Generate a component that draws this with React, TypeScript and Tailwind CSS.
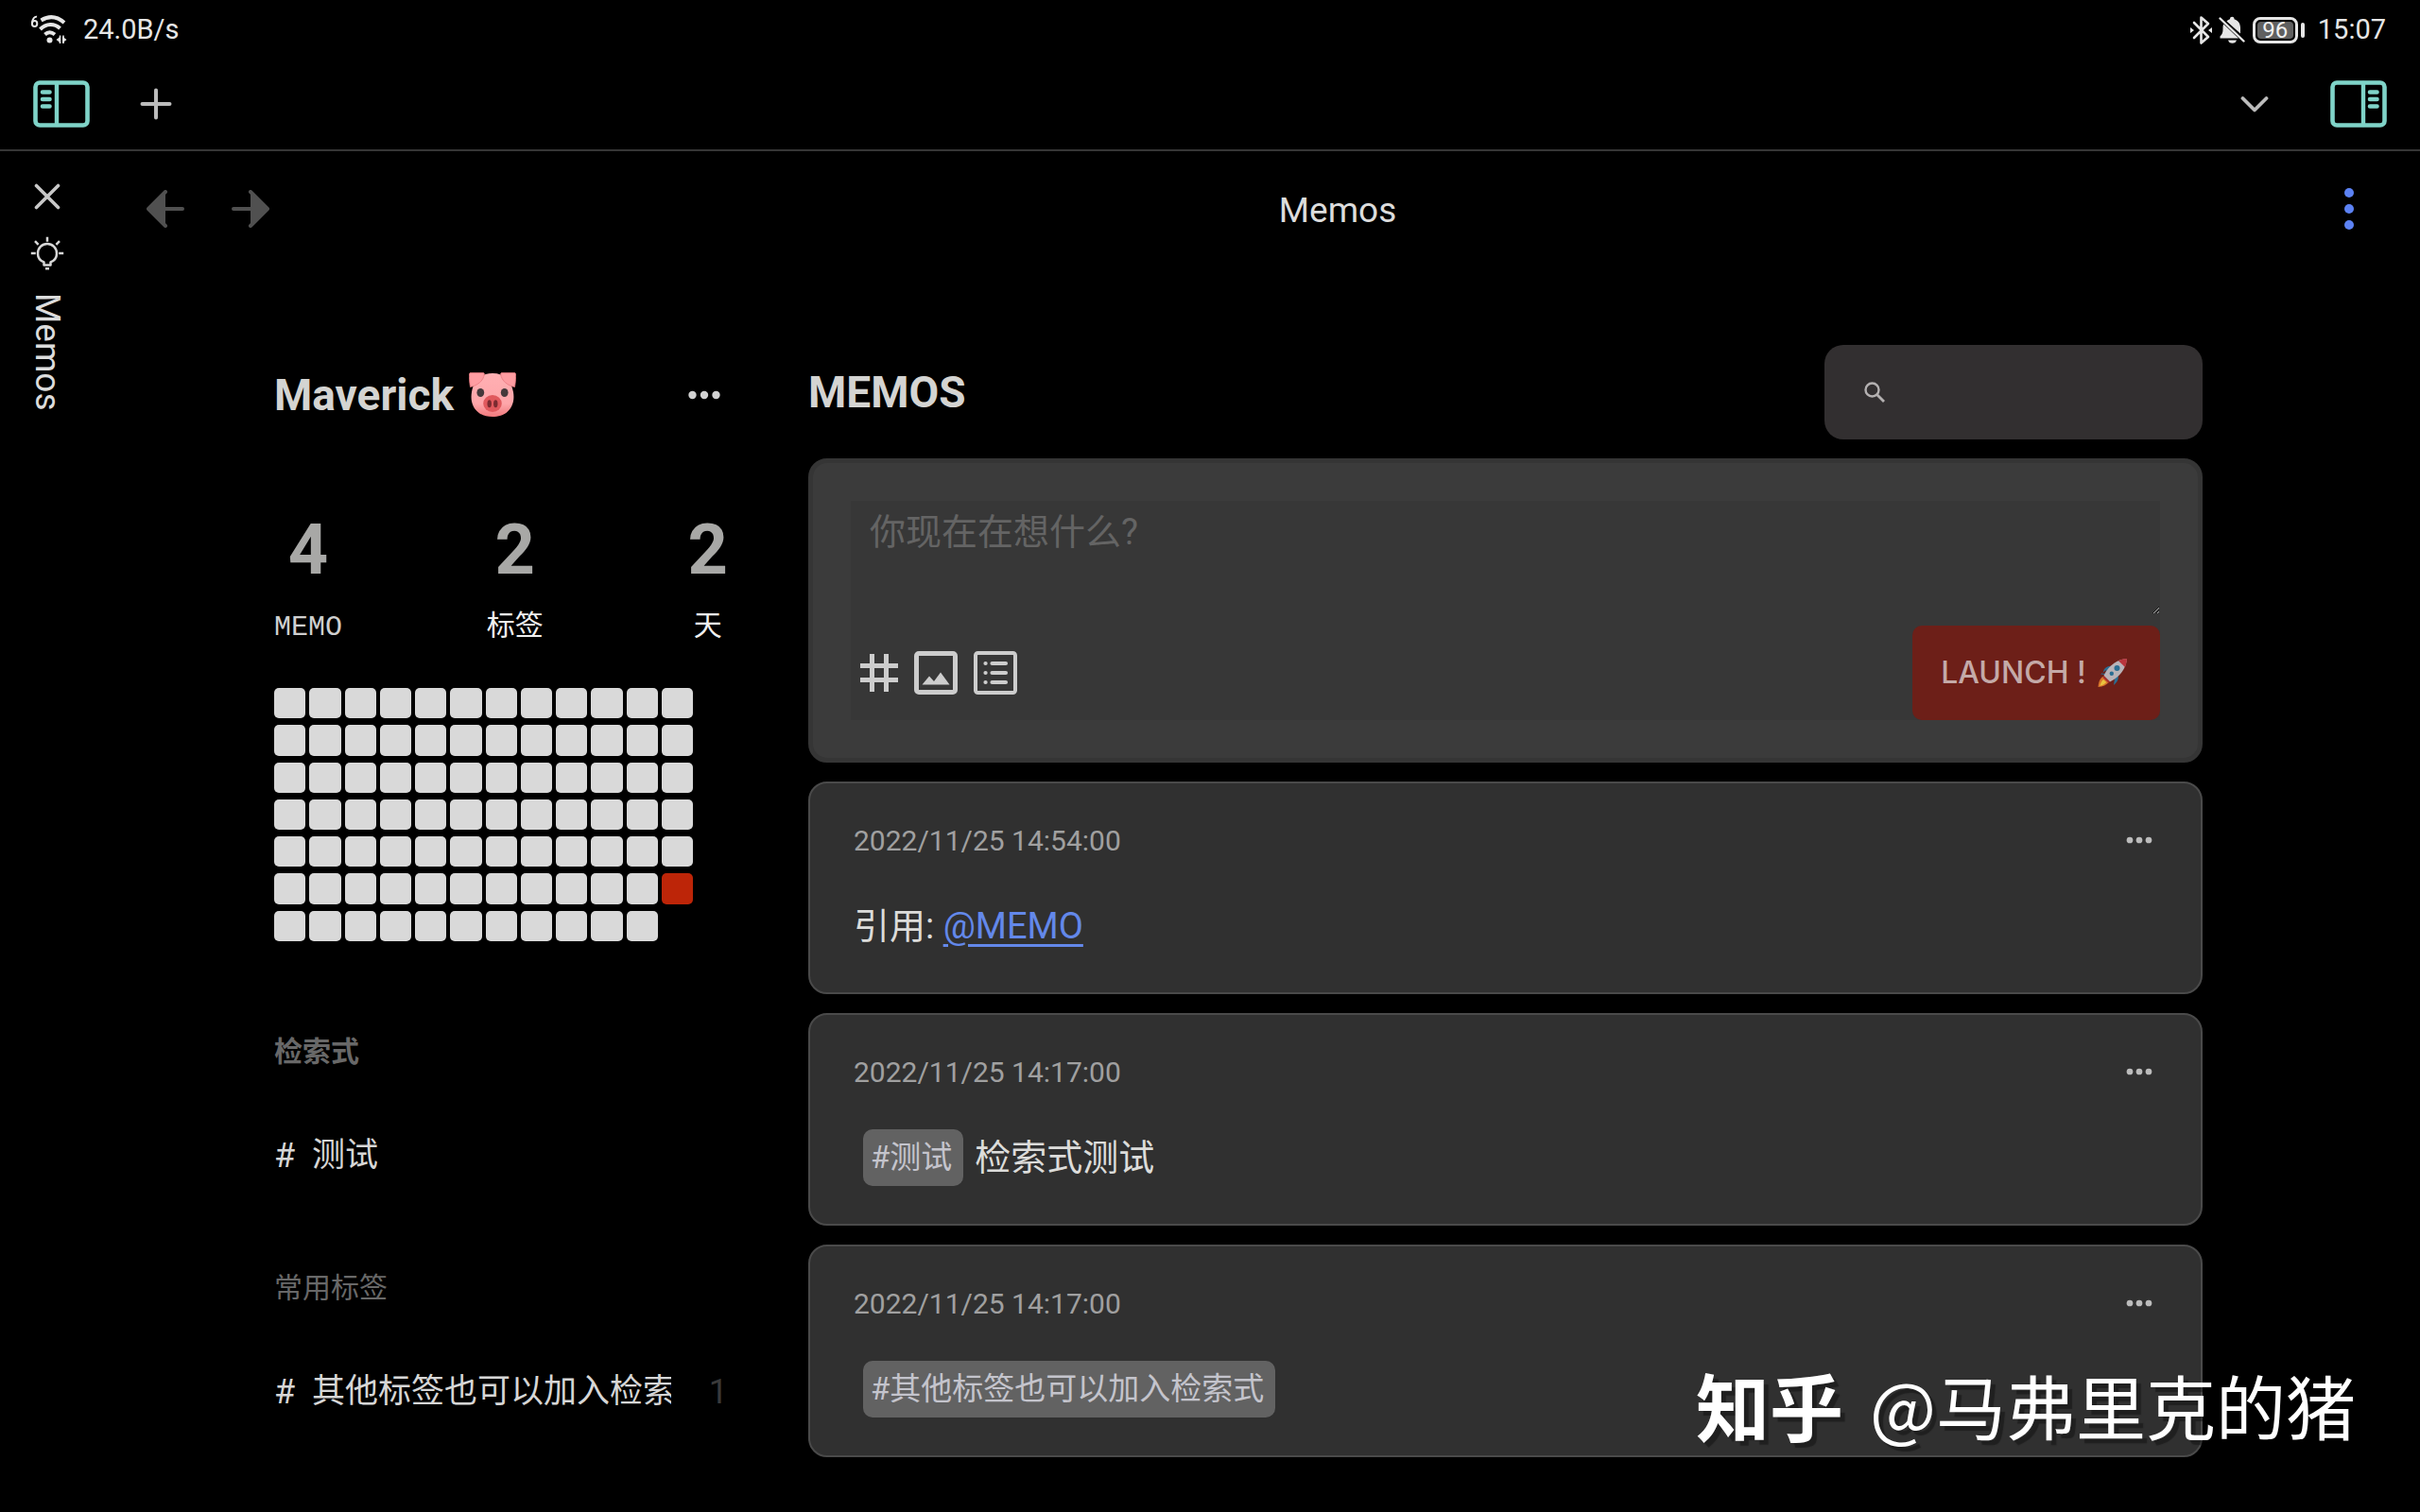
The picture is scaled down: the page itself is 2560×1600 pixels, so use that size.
import React from "react";

const DAYS = 83;
const ACTIVE_DAY_COL = 11;
const ACTIVE_DAY_ROW = 5;

function WifiIcon() {
  return (
    <svg width="40" height="34" viewBox="0 0 40 34" fill="none" stroke="#e6e6e6" aria-hidden="true">
      <path d="M7 2.8 C5 2.2 2 4.5 2 9.5" strokeWidth="2" />
      <ellipse cx="4.6" cy="10" rx="2.7" ry="3" strokeWidth="2" />
      <path d="M11.5 6.5 C19.5 1.5 28 2 36 9" strokeWidth="4" />
      <path d="M10.5 16 C17 9.5 25.5 9.5 31.5 15" strokeWidth="4" />
      <path d="M15.5 21.5 C18.5 18.7 22.5 18.7 26 21.5" strokeWidth="4" />
      <circle cx="20.5" cy="27.5" r="3" fill="#e6e6e6" stroke="none" />
      <path d="M32 23.5v7L27.5 27zM34 23.5v7L38.5 27z" fill="#e6e6e6" stroke="none" />
      <path d="M31.5 22.5v8.500M35 22.500v8.500" strokeWidth="1.600" />
    </svg>
  );
}

function BluetoothIcon() {
  return (
    <svg width="24" height="32" viewBox="0 0 24 32" fill="none" stroke="#e6e6e6" strokeWidth="2.6" strokeLinejoin="round" strokeLinecap="round" aria-hidden="true">
      <path d="M4 8l15 15-7.500 6.500V2.500L19 9 4 24" />
      <path d="M0 13l4 3-4 3zM23 13l-4 3 4 3z" fill="#e6e6e6" stroke="none" />
    </svg>
  );
}

function MutedBellIcon() {
  return (
    <svg width="28" height="30" viewBox="0 0 28 30" aria-hidden="true">
      <path d="M8.500 5.500C10 4 11 3.400 12 3.200 12 1.500 13 .8 14.200.8s2.300.8 2.300 2.400c4.500 1.500 6.500 5 6.500 9.300v6L8.500 5.500z" fill="#e6e6e6" />
      <path d="M5.200 8.500L21 23.500H1.500v-2c2.500-2.500 3-4.500 3-8 0-2 0-3.500.7-5zM10 25.500h9c-.5 2-2.200 3.300-4.500 3.300S10.500 27.500 10 25.500z" fill="#e6e6e6" />
      <path d="M1.500 2.500l25 24" stroke="#e6e6e6" strokeWidth="2.400" strokeLinecap="round" />
    </svg>
  );
}

function Battery() {
  return (
    <span className="flex items-center gap-[3px]">
      <span className="flex h-7 w-12 rounded-lg border-[3px] border-[#e6e6e6] p-0.5">
        <span className="flex flex-1 items-center justify-center rounded-sm bg-[#606060] text-2xl leading-none text-[#f0f0f0]">96</span>
      </span>
      <span className="h-4 w-1 rounded-sm bg-[#e6e6e6]" />
    </span>
  );
}

function PanelIcon({ side }: { side: "left" | "right" }) {
  const divider = side === "left" ? 25 : 35;
  const start = side === "left" ? 10 : 42;
  return (
    <svg width="60" height="50" viewBox="0 0 60 50" fill="none" stroke="#7fd3c8" strokeLinecap="round" aria-hidden="true">
      <rect x="2.500" y="2.500" width="55" height="45" rx="4.500" strokeWidth="4.600" />
      <path d={`M${divider} 3v44`} strokeWidth="4.400" />
      <path d={`M${start} 12.500h7.500M${start} 20h7.500M${start} 27.500h7.500`} strokeWidth="4.600" />
    </svg>
  );
}

function PlusIcon() {
  return (
    <svg width="34" height="34" viewBox="0 0 34 34" stroke="#bcbcbc" strokeWidth="4" strokeLinecap="round" aria-hidden="true">
      <path d="M17 2.500v29M2.500 17h29" />
    </svg>
  );
}

function ChevronIcon() {
  return (
    <svg width="30" height="18" viewBox="0 0 30 18" fill="none" stroke="#bcbcbc" strokeWidth="3.800" strokeLinecap="round" strokeLinejoin="round" aria-hidden="true">
      <path d="M2.500 3L15 15.500 27.500 3" />
    </svg>
  );
}

function CloseIcon() {
  return (
    <svg width="28" height="28" viewBox="0 0 28 28" stroke="#c8c8c8" strokeWidth="3.600" strokeLinecap="round" aria-hidden="true">
      <path d="M2.500 2.500l23 23M25.500 2.500l-23 23" />
    </svg>
  );
}

function BulbIcon() {
  return (
    <svg width="36" height="36" viewBox="0 0 36 36" fill="none" stroke="#d8d8d8" strokeWidth="2.500" aria-hidden="true">
      <path d="M14.500 30.500v-3.200C10.500 25.800 8 22.300 8 18.200 8 12.500 12.500 8 18 8s10 4.500 10 10.200c0 4.100-2.500 7.600-6.500 9.100v3.200z" strokeLinejoin="round" />
      <path d="M16 34.300h4M18 .8v5M.8 18h5M30.200 18h5M5 5.200l3.600 3.600M31 5.200l-3.600 3.600" />
    </svg>
  );
}

function ArrowIcon({ direction }: { direction: "back" | "forward" }) {
  return (
    <svg width="40" height="40" viewBox="0 0 40 40" stroke="#505050" strokeWidth="4" strokeLinecap="round" strokeLinejoin="round" aria-hidden="true">
      {direction === "back" ? (
        <>
          <path d="M20 20h18" />
          <path d="M20 2L2 20l18 18" fill="#505050" />
        </>
      ) : (
        <>
          <path d="M2 20h18" />
          <path d="M20 2l18 18-18 18" fill="#505050" />
        </>
      )}
    </svg>
  );
}

function PigIcon() {
  return (
    <svg width="50" height="50" viewBox="0 0 50 48" role="img" aria-label="pig">
      <defs>
        <linearGradient id="pigHead" x1="0" y1="0" x2="0" y2="1">
          <stop offset="0" stopColor="#ffb0b3" />
          <stop offset=".7" stopColor="#fea6aa" />
          <stop offset="1" stopColor="#f0797c" />
        </linearGradient>
      </defs>
      <path d="M25 1c13 0 20 8 22 20 1.500 9-1 16-6 20.500C37 45.500 31 47 25 47S13 45.500 9 41.500C4 37 1.500 30 3 21 5 9 12 1 25 1z" fill="url(#pigHead)" />
      <path d="M.5 2C.5 1 1 .6 2 .6h13c1 0 1.500.5 1.300 1.400C15.500 9 9 14 1.500 15.500.5 10 .3 5 .5 2z" fill="#ff9da2" stroke="#e87a80" strokeWidth=".8" />
      <path d="M49.500 2c0-1-.5-1.400-1.500-1.400H35c-1 0-1.500.5-1.300 1.400C34.500 9 41 14 48.500 15.500 49.500 10 49.700 5 49.500 2z" fill="#ff9da2" stroke="#e87a80" strokeWidth=".8" />
      <ellipse cx="12.300" cy="21.500" rx="3.900" ry="4.600" fill="#45393b" />
      <ellipse cx="37.700" cy="21.500" rx="3.900" ry="4.600" fill="#45393b" />
      <ellipse cx="25" cy="33" rx="9.800" ry="9" fill="#e0595d" />
      <ellipse cx="21.700" cy="33.300" rx="2.200" ry="4" fill="#7a2b30" />
      <ellipse cx="28.300" cy="33.300" rx="2.200" ry="4" fill="#7a2b30" />
    </svg>
  );
}

function RocketIcon() {
  return (
    <svg width="32" height="32" viewBox="0 0 32 32" aria-hidden="true">
      <path d="M9 13l-6 4.500c2 0 4 .5 5 1zM18 22l-1 7c3-2.500 5-5 5-10zM7 12c3-3.500 6-3.500 9-3l-5 7-6 1z" fill="#2b6d92" />
      <path d="M6.500 19.500C3 21 1 25 .5 31c5-.5 9-2 11.500-5.500z" fill="#d8762c" />
      <path d="M6 23c-2 2-3 4.500-3.800 7 2.800-.8 5.300-2 7-4z" fill="#e8c33e" />
      <path d="M31 1C22 1.500 12 7 6.500 19l6.500 6.500C24 20 30 11 31 1z" fill="#b9b3b8" />
      <path d="M31 1c-3 .1-6 .8-9 2.200L29 10c1.200-3 1.800-6 2-9z" fill="#b9353c" />
      <circle cx="20.500" cy="11" r="3" fill="#2b6d92" />
      <circle cx="14.800" cy="16.800" r="2.200" fill="#2b6d92" />
      <path d="M6.500 19L13 25.500l-1.600 1.200L5.500 21z" fill="#a8322f" />
    </svg>
  );
}

function SearchIcon() {
  return (
    <svg width="22" height="22" viewBox="0 0 22 22" fill="none" stroke="#b4b1b1" strokeWidth="2.400" aria-hidden="true">
      <circle cx="8.500" cy="8.500" r="7" />
      <path d="M13.500 13.500l7.500 7.500" strokeWidth="2.800" />
    </svg>
  );
}

function HashIcon() {
  return (
    <svg width="40" height="40" viewBox="0 0 40 40" stroke="#cdcdcd" strokeWidth="5" aria-hidden="true">
      <path d="M12.500 0v40M27.500 0v40M0 12.500h40M0 27.500h40" />
    </svg>
  );
}

function ImageIcon() {
  return (
    <svg width="46" height="46" viewBox="0 0 46 46" fill="none" aria-hidden="true">
      <rect x="2.500" y="2.500" width="41" height="41" rx="2.500" stroke="#cdcdcd" strokeWidth="5" />
      <path d="M8.500 35.500l7.500-9 5 5.500 7-9.500 9.500 13z" fill="#cdcdcd" />
    </svg>
  );
}

function ListIcon() {
  return (
    <svg width="46" height="46" viewBox="0 0 46 46" fill="none" stroke="#cdcdcd" aria-hidden="true">
      <rect x="2" y="2" width="42" height="42" rx="2.500" strokeWidth="4" />
      <path d="M19.500 13h14.500M19.500 23h14.500M19.500 33h14.500M12.500 13h.1M12.500 23h.1M12.500 33h.1" strokeWidth="4.200" strokeLinecap="round" />
    </svg>
  );
}

function MoreIcon({ small = false }: { small?: boolean }) {
  return (
    <svg width={small ? 28 : 34} height={small ? 8 : 10} viewBox="0 0 34 10" fill={small ? "#bcbcbc" : "#d2d2d2"} aria-hidden="true">
      <circle cx="4.500" cy="5" r="4.200" />
      <circle cx="17" cy="5" r="4.200" />
      <circle cx="29.500" cy="5" r="4.200" />
    </svg>
  );
}

function StatusBar() {
  return (
    <div className="flex h-[62px] items-center justify-between pt-0.5 pr-9 pl-8 text-[29px] text-[#e6e6e6]">
      <div className="flex items-center gap-4">
        <WifiIcon />
        <span>24.0B/s</span>
      </div>
      <div className="flex items-center">
        <BluetoothIcon />
        <span className="ml-1.5">
          <MutedBellIcon />
        </span>
        <span className="mr-3.5 ml-2">
          <Battery />
        </span>
        <span>15:07</span>
      </div>
    </div>
  );
}

function TabBar() {
  return (
    <div className="flex h-[98px] items-center justify-between border-b-2 border-[#363636] px-[35px]">
      <div className="flex items-center gap-[53px]">
        <button type="button" aria-label="Toggle left panel">
          <PanelIcon side="left" />
        </button>
        <button type="button" aria-label="New tab">
          <PlusIcon />
        </button>
      </div>
      <div className="flex items-center gap-[65px]">
        <button type="button" aria-label="Tab list">
          <ChevronIcon />
        </button>
        <button type="button" aria-label="Toggle right panel">
          <PanelIcon side="right" />
        </button>
      </div>
    </div>
  );
}

function Rail() {
  return (
    <div className="flex w-[100px] shrink-0 flex-col items-center pt-[34px]">
      <button type="button" aria-label="Close">
        <CloseIcon />
      </button>
      <span className="mt-7">
        <BulbIcon />
      </span>
      <span className="mt-6 text-[37px] leading-10 text-[#dcdcdc] [writing-mode:vertical-rl]">Memos</span>
    </div>
  );
}

function ViewHeader() {
  return (
    <header className="flex h-[122px] items-center pr-10 pl-[55px]">
      <div className="mr-[95px] flex gap-[50px]">
        <button type="button" aria-label="Back">
          <ArrowIcon direction="back" />
        </button>
        <button type="button" aria-label="Forward">
          <ArrowIcon direction="forward" />
        </button>
      </div>
      <h1 className="flex-1 pt-1 text-center text-[37px] leading-10 text-[#dcdcdc]">Memos</h1>
      <button type="button" aria-label="More options" className="flex w-[70px] flex-col items-center gap-[7px]">
        <span className="size-[10px] rounded-full bg-[#5c82f4]" />
        <span className="size-[10px] rounded-full bg-[#5c82f4]" />
        <span className="size-[10px] rounded-full bg-[#5c82f4]" />
      </button>
    </header>
  );
}

function Stat({ value, label, mono = false }: { value: string; label: string; mono?: boolean }) {
  return (
    <div className="flex flex-col items-center gap-5">
      <span className="text-[74px] leading-[80px] font-bold text-[#a8a8a6]">{value}</span>
      <span className={mono ? "pt-0.5 font-['Liberation_Mono',monospace] text-[30px] leading-10 text-[#cfcfcf]" : "text-[30px] leading-10"}>{label}</span>
    </div>
  );
}

function HeatMap() {
  return (
    <div className="mt-11 grid h-[268px] w-[443px] grid-flow-col grid-cols-12 grid-rows-7 gap-x-1 gap-y-[7px]">
      {Array.from({ length: DAYS }, (_, i) => {
        const active = i === ACTIVE_DAY_COL * 7 + ACTIVE_DAY_ROW;
        return <span key={i} className={active ? "rounded-[5px] bg-[#bd2508]" : "rounded-[5px] bg-[#d9d9d9]"} />;
      })}
    </div>
  );
}

function TagRow({ name, count }: { name: string; count?: string }) {
  return (
    <button type="button" className="mt-15 flex h-15 w-full items-center text-left text-[#d6d6d6]">
      <span className="w-10 shrink-0 text-4xl">#</span>
      <span className="w-[380px] shrink-0 overflow-hidden text-[35px] whitespace-nowrap">{name}</span>
      {count && <span className="flex-1 text-right text-4xl text-[#3a3a3a]">{count}</span>}
    </button>
  );
}

function Sidebar() {
  return (
    <aside className="w-[480px] shrink-0">
      <div className="flex h-[106px] items-center justify-between pr-2">
        <div className="flex items-center gap-4">
          <h2 className="text-[46px] font-bold text-[#d4d4d2]">Maverick</h2>
          <PigIcon />
        </div>
        <button type="button" aria-label="Account menu">
          <MoreIcon />
        </button>
      </div>
      <div className="mt-[71px] flex justify-between text-[#f0f0f0]">
        <Stat value="4" label="MEMO" mono />
        <Stat value="2" label="标签" />
        <Stat value="2" label="天" />
      </div>
      <HeatMap />
      <h3 className="mt-[97px] text-[30px] leading-10 font-bold text-[#686868]">检索式</h3>
      <TagRow name="测试" />
      <h3 className="mt-[90px] text-[30px] leading-10 text-[#686868]">常用标签</h3>
      <TagRow name="其他标签也可以加入检索式" count="1" />
    </aside>
  );
}

function Editor() {
  return (
    <form className="mt-5 rounded-[20px] border-[5px] border-[#353535] bg-[#3b3b3b] p-10" onSubmit={(e) => e.preventDefault()}>
      <div className="bg-[#373737]">
        <textarea
          aria-label="Memo"
          placeholder="你现在在想什么?"
          className="mb-3 block h-[120px] w-full bg-transparent px-5 pt-2 text-[38px] leading-[50px] text-[#dcdcdc] outline-none placeholder:text-[#646464]"
        />
        <div className="flex h-[100px] items-center justify-between pl-[10px]">
          <div className="flex items-center gap-[17px]">
            <button type="button" aria-label="Insert tag">
              <HashIcon />
            </button>
            <button type="button" aria-label="Insert image">
              <ImageIcon />
            </button>
            <button type="button" aria-label="Insert list">
              <ListIcon />
            </button>
          </div>
          <button
            type="submit"
            className="flex h-full w-[262px] items-center justify-center gap-3 rounded-[10px] bg-[#6d1f18] pr-1 font-['Inter',sans-serif] text-[32px] font-medium text-[#c4aaa8]"
          >
            <span>LAUNCH !</span>
            <RocketIcon />
          </button>
        </div>
      </div>
    </form>
  );
}

function Memo({ time, children }: { time: string; children: React.ReactNode }) {
  return (
    <article className="mt-5 rounded-[20px] border-2 border-[#4a4a4a] bg-[#303030] pt-10 pr-[51px] pb-10 pl-[46px]">
      <div className="flex h-10 items-center justify-between">
        <time className="text-[30px] text-[#a0a0a0]">{time}</time>
        <button type="button" aria-label="Memo menu">
          <MoreIcon small />
        </button>
      </div>
      <div className="mt-[41px] flex h-15 items-center text-[38px] text-[#dcdcda]">{children}</div>
    </article>
  );
}

function TagChip({ children }: { children: string }) {
  return (
    <button type="button" className="mr-3 ml-[10px] h-15 rounded-[10px] bg-[#626262] pr-3 pl-2 text-[33px] text-[#c4c4cc]">
      {children}
    </button>
  );
}

function Watermark() {
  return (
    <div className="pointer-events-none absolute right-[68px] bottom-14 flex items-center gap-7 font-['Noto_Sans_CJK_SC',sans-serif] leading-[116px] whitespace-nowrap text-white [text-shadow:5px_5px_1px_rgba(0,0,0,0.35)]">
      <span className="text-[78px] font-bold">知乎</span>
      <span className="text-[74px]">@马弗里克的猪</span>
    </div>
  );
}

export default function App() {
  return (
    <div className="relative flex min-h-screen flex-col overflow-hidden bg-black font-['Roboto','Noto_Sans_CJK_SC',sans-serif]">
      <StatusBar />
      <TabBar />
      <div className="flex flex-1">
        <Rail />
        <div className="min-w-0 flex-1">
          <ViewHeader />
          <main className="flex gap-[85px] pt-[83px] pr-[230px] pl-[190px]">
            <Sidebar />
            <section className="min-w-0 flex-1">
              <div className="flex h-[100px] items-center justify-between">
                <h2 className="text-[46px] font-bold text-[#d4d4d2]">MEMOS</h2>
                <label className="flex h-full w-[400px] items-center gap-3 rounded-[20px] bg-[#322f30] pr-5 pl-[42px]">
                  <SearchIcon />
                  <input type="search" aria-label="Search memos" className="min-w-0 flex-1 bg-transparent text-[30px] text-[#dcdcdc] outline-none" />
                </label>
              </div>
              <Editor />
              <Memo time="2022/11/25 14:54:00">
                <span className="whitespace-pre">引用: </span>
                <a href="#memo" className="text-[#6388ea] underline decoration-[3px] underline-offset-[6px]">
                  @MEMO
                </a>
              </Memo>
              <Memo time="2022/11/25 14:17:00">
                <TagChip>#测试</TagChip>
                <span>检索式测试</span>
              </Memo>
              <Memo time="2022/11/25 14:17:00">
                <TagChip>#其他标签也可以加入检索式</TagChip>
              </Memo>
            </section>
          </main>
        </div>
      </div>
      <Watermark />
    </div>
  );
}
